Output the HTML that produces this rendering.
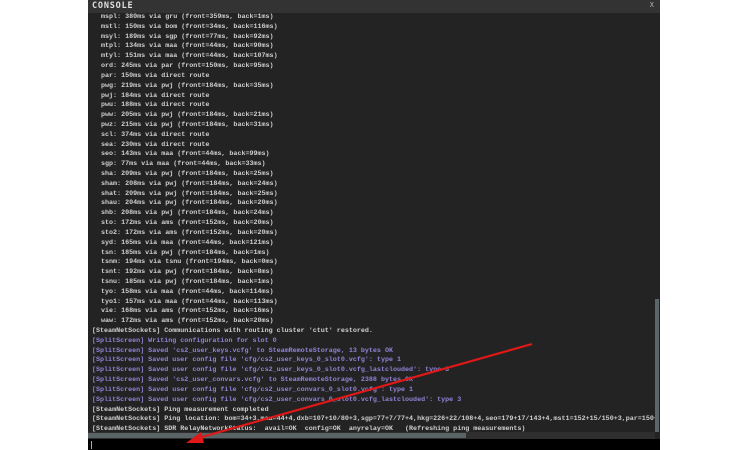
<!DOCTYPE html>
<html><head><meta charset="utf-8"><style>
body{margin:0;width:750px;height:450px;background:#fff;position:relative;overflow:hidden}
#c{position:absolute;left:88px;top:0;width:572px;height:450px;background:#232323}
#t{position:absolute;left:0;top:0;width:572px;height:13px;background:#333;color:#e0e0e0;font:bold 8.5px "DejaVu Sans Mono","Liberation Mono",monospace;line-height:12px;padding-left:4px;box-sizing:border-box;letter-spacing:0.8px}
#x{position:absolute;right:6px;top:0;color:#bbb;font:7px "Liberation Mono",monospace;line-height:12px}
#o{position:absolute;left:4px;top:13px;font:6.7px "Liberation Mono",monospace;line-height:9.82px;color:#cfcfcf;white-space:pre;font-weight:bold}
.i{padding-left:9px}
.p{color:#9382d6}
#vs{position:absolute;left:567px;top:299px;width:4px;height:133px;background:#5c6668}
#hb{position:absolute;left:0;top:432px;width:567px;height:7px;background:#2e2e2e}
#hs{position:absolute;left:0;top:433px;width:378px;height:5px;background:#5a6466}
#in{position:absolute;left:0;top:439px;width:572px;height:11px;background:#000}
#cur{position:absolute;left:3px;top:441px;width:1px;height:8px;background:#aaa}
</style></head><body>
<div id="c">
<div id="o"><span class="i">mspl: 380ms via gru (front=359ms, back=1ms)
</span><span class="i">mstl: 150ms via bom (front=34ms, back=116ms)
</span><span class="i">msyl: 189ms via sgp (front=77ms, back=92ms)
</span><span class="i">mtpl: 134ms via maa (front=44ms, back=90ms)
</span><span class="i">mtyl: 151ms via maa (front=44ms, back=107ms)
</span><span class="i">ord: 245ms via par (front=150ms, back=95ms)
</span><span class="i">par: 150ms via direct route
</span><span class="i">pwg: 219ms via pwj (front=184ms, back=35ms)
</span><span class="i">pwj: 184ms via direct route
</span><span class="i">pwu: 188ms via direct route
</span><span class="i">pww: 205ms via pwj (front=184ms, back=21ms)
</span><span class="i">pwz: 215ms via pwj (front=184ms, back=31ms)
</span><span class="i">scl: 374ms via direct route
</span><span class="i">sea: 230ms via direct route
</span><span class="i">seo: 143ms via maa (front=44ms, back=99ms)
</span><span class="i">sgp: 77ms via maa (front=44ms, back=33ms)
</span><span class="i">sha: 209ms via pwj (front=184ms, back=25ms)
</span><span class="i">sham: 208ms via pwj (front=184ms, back=24ms)
</span><span class="i">shat: 209ms via pwj (front=184ms, back=25ms)
</span><span class="i">shau: 204ms via pwj (front=184ms, back=20ms)
</span><span class="i">shb: 208ms via pwj (front=184ms, back=24ms)
</span><span class="i">sto: 172ms via ams (front=152ms, back=20ms)
</span><span class="i">sto2: 172ms via ams (front=152ms, back=20ms)
</span><span class="i">syd: 165ms via maa (front=44ms, back=121ms)
</span><span class="i">tsn: 185ms via pwj (front=184ms, back=1ms)
</span><span class="i">tsnm: 194ms via tsnu (front=194ms, back=0ms)
</span><span class="i">tsnt: 192ms via pwj (front=184ms, back=8ms)
</span><span class="i">tsnu: 185ms via pwj (front=184ms, back=1ms)
</span><span class="i">tyo: 158ms via maa (front=44ms, back=114ms)
</span><span class="i">tyo1: 157ms via maa (front=44ms, back=113ms)
</span><span class="i">vie: 168ms via ams (front=152ms, back=16ms)
</span><span class="i">waw: 172ms via ams (front=152ms, back=20ms)
</span>[SteamNetSockets] Communications with routing cluster 'ctut' restored.
<span class="p">[SplitScreen] Writing configuration for slot 0
[SplitScreen] Saved 'cs2_user_keys.vcfg' to SteamRemoteStorage, 13 bytes OK
[SplitScreen] Saved user config file 'cfg/cs2_user_keys_0_slot0.vcfg': type 1
[SplitScreen] Saved user config file 'cfg/cs2_user_keys_0_slot0.vcfg_lastclouded': type 3
[SplitScreen] Saved 'cs2_user_convars.vcfg' to SteamRemoteStorage, 2388 bytes OK
[SplitScreen] Saved user config file 'cfg/cs2_user_convars_0_slot0.vcfg': type 1
[SplitScreen] Saved user config file 'cfg/cs2_user_convars_0_slot0.vcfg_lastclouded': type 3</span>
[SteamNetSockets] Ping measurement completed
[SteamNetSockets] Ping location: bom=34+3,maa=44+4,dxb=107+10/80+3,sgp=77+7/77+4,hkg=226+22/108+4,seo=179+17/143+4,mst1=152+15/150+3,par=150+
[SteamNetSockets] SDR RelayNetworkStatus:  avail=OK  config=OK  anyrelay=OK   (Refreshing ping measurements)</div>
<div id="t">CONSOLE</div><div id="x">X</div>
<div id="vs"></div><div id="hb"></div><div id="hs"></div><div id="in"></div><div id="cur"></div>
</div>
<svg style="position:absolute;left:0;top:0" width="750" height="450"><line x1="532" y1="344" x2="198" y2="438" stroke="#e01818" stroke-width="2.2"/><polygon points="186,443 201,432 204,443" fill="#e01818"/></svg>
</body></html>
